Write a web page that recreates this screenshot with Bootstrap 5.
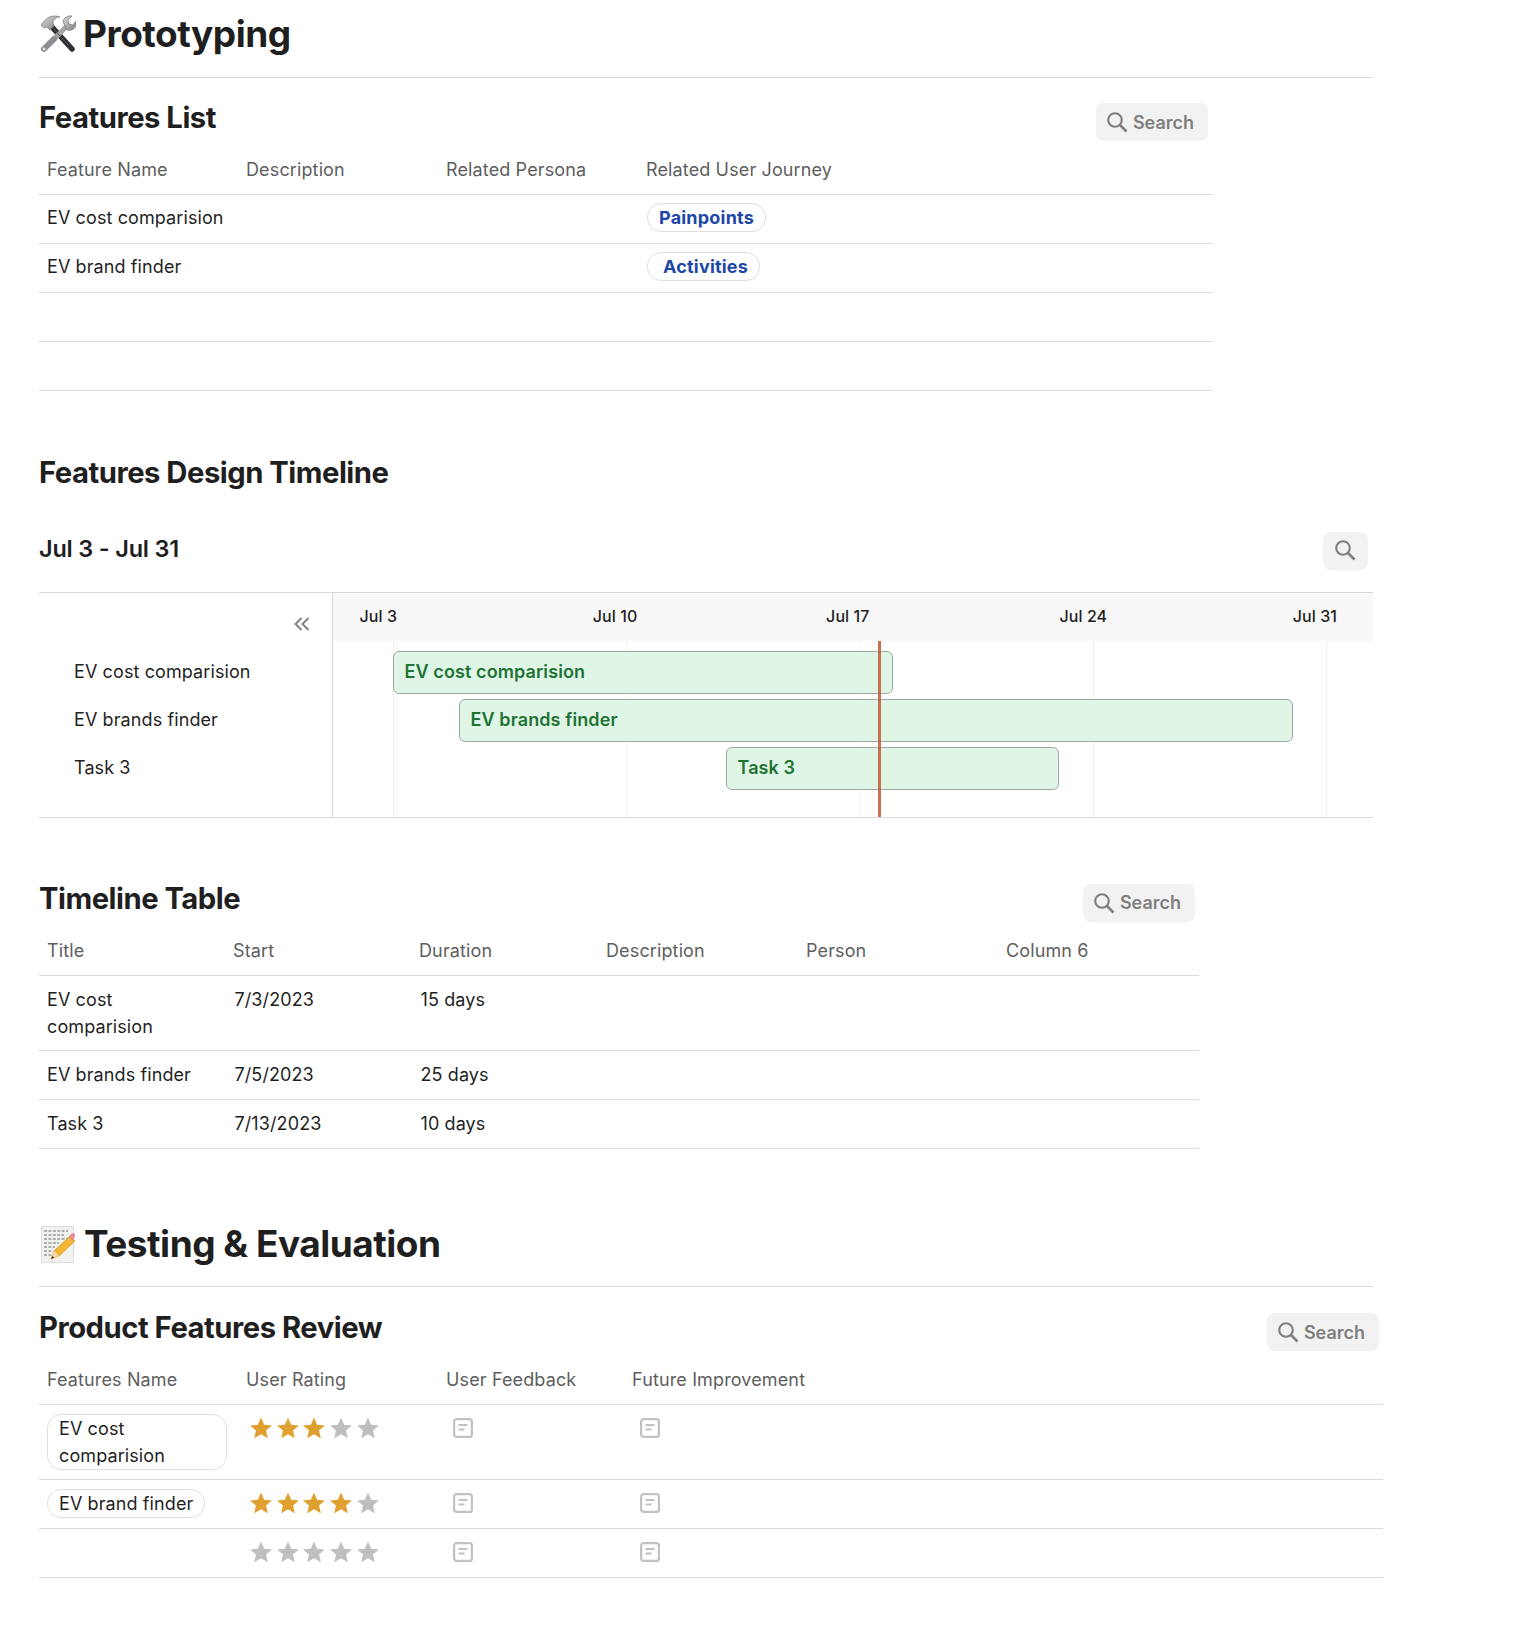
<!DOCTYPE html>
<html lang="en">
<head>
    <meta charset="UTF-8">
    <meta name="viewport" content="width=device-width, initial-scale=1.0">
    <title>Prototyping</title>
    <link rel="stylesheet" href="https://cdn.jsdelivr.net/npm/bootstrap@5.3.0/dist/css/bootstrap.min.css">
    <style>
        body {
            font-family: Inter, "Noto Sans", sans-serif;
            font-size: 18px;
            line-height: 27px;
            letter-spacing: .1px;
            color: #1f1f1f;
            background: #fff;
        }
        .page-wrap { padding: 12px 0 40px 39px; width: 1400px; }

        /* Headings */
        .page-title {
            display: flex;
            align-items: center;
            gap: 7px;
            font-size: 37px;
            line-height: 44px;
            font-weight: 700;
            letter-spacing: -0.5px;
            margin: 0;
            color: #1f1f1f;
        }
        .page-rule {
            width: 1334px;
            margin: 20px 0 26px;
            border: 0;
            border-top: 1px solid #d9d9d9;
            opacity: 1;
        }
        .first-rule { margin: 21px 0 25px; }
        .sec-title {
            font-size: 29.25px;
            line-height: 30px;
            font-weight: 700;
            letter-spacing: -0.5px;
            margin: 0;
            color: #1f1f1f;
        }
        .sec-head { height: 38px; padding-right: 4px; }
        .w-list { width: 1174px; }
        .w-list.sec-head { padding-right: 5px; }
        .w-time { width: 1160px; }
        .w-review { width: 1344px; }

        .search-btn {
            display: flex;
            align-items: center;
            gap: 5px;
            height: 38px;
            padding: 0 14px 0 10px;
            border: 0;
            border-radius: 8px;
            background: #f2f2f2;
            color: #7f7f7f;
            font-size: 18px;
            font-weight: 600;
        }
        .search-only { width: 45px; height: 38px; padding: 0 2px 2px 0; justify-content: center; }

        /* Tables */
        .flat-table {
            table-layout: fixed;
            margin: 4px 0 0;
            --bs-table-color: #1f1f1f;
            --bs-table-border-color: #dcdcdc;
        }
        .flat-table th, .flat-table td {
            height: 49px;
            padding: 9.5px 11px 10.5px 8px;
            vertical-align: top;
            border-bottom: 1px solid #dcdcdc;
        }
        .flat-table th {
            padding-top: 10.5px;
            padding-bottom: 9.5px;
            font-weight: 400;
            color: #5e5e5e;
            letter-spacing: .13px;
        }
        .col-199 { width: 199px; }
        .col-200 { width: 200px; }
        .col-186 { width: 186px; }
        .col-187 { width: 187px; }
        .flat-table .date-val { padding-left: 9.5px; }

        .link-pill {
            display: inline-block;
            vertical-align: top;
            min-width: 113px;
            padding: 0 11px;
            margin-left: 1px;
            border: 1px solid #e0e0e0;
            border-radius: 14px;
            line-height: 27px;
            text-align: center;
            font-weight: 700;
            letter-spacing: .2px;
            color: #1c47a8;
        }
        .pill-shift { padding-left: 15px; }
        .name-pill {
            display: inline-block;
            vertical-align: top;
            padding: 0 11px;
            border: 1px solid #e0e0e0;
            border-radius: 14px;
            line-height: 27px;
        }
        .flat-table .pill-cell { padding-top: 9px; padding-bottom: 9px; }
        .flat-table .link-cell { padding-top: 8px; padding-bottom: 8px; }
        .star-set { display: flex; gap: 4.7px; margin: 1px 0 0 4px; height: 26px; align-items: center; }
        .doc-icon { display: block; margin: 3.5px 0 0 7px; }
        .doc-last { margin-left: 8px; }

        /* Timeline */
        .features-timeline { line-height: 36px; margin-top: 64px; }
        .timeline-title { font-size: 23.5px; line-height: 34px; font-weight: 600; margin: 0; letter-spacing: -0.2px; }
        .timeline-head { width: 1334px; height: 37px; margin-top: 41px; padding-right: 5px; }
        .gantt {
            display: flex;
            width: 1334px;
            height: 226px;
            margin-top: 23px;
            border-top: 1px solid #d9d9d9;
            border-bottom: 1px solid #d9d9d9;
        }
        .gantt-side { width: 294px; border-right: 1px solid #d9d9d9; flex: none; }
        .collapse-mark { height: 48px; padding: 24px 22px 0 0; text-align: right; line-height: 0; }
        .side-list { padding: 7px 0 0 35px; }
        .side-row { height: 48px; line-height: 48px; }
        .gantt-main { flex: 1; min-width: 0; display: flex; flex-direction: column; }
        .gantt-dates {
            display: flex;
            height: 48px;
            padding-left: 26.5px;
            background: #f8f8f8;
            font-size: 16px;
            font-weight: 500;
            line-height: 46px;
            flex: none;
            overflow: hidden;
        }
        .date-cell { width: 233.3px; flex: none; }
        .gantt-body {
            position: relative;
            flex: 1;
            padding-top: 10px;
            background-image: linear-gradient(to right, #efefef 1px, transparent 1px);
            background-size: 233.3px 100%;
            background-position: 60px 0;
        }
        .gantt-bar {
            height: 43px;
            margin-bottom: 5px;
            padding-left: 10.5px;
            border: 1px solid #9fa9a3;
            border-radius: 6px;
            background: #dff6e7;
            color: #1f7335;
            font-weight: 600;
            line-height: 39px;
        }
        .today-line {
            position: absolute;
            left: 545px;
            top: 0;
            bottom: 0;
            width: 3px;
            background: #c9704f;
        }

        .timeline-table-head { margin-top: 66px; }
        .timeline-table-head + table { margin-top: 5px; }
        .testing-title { margin-top: 73px; gap: 9px; }
        .testing-title svg { margin-left: 2px; }
    </style>
</head>
<body>
    <svg width="0" height="0" class="d-block">
        <defs>
            <symbol id="i-search" viewBox="0 0 22 22">
                <circle cx="9" cy="9" r="6.8" fill="none" stroke="currentColor" stroke-width="2.1"/>
                <path d="M14 14l6.5 6.5" stroke="currentColor" stroke-width="2.6" fill="none"/>
            </symbol>
            <symbol id="i-star" viewBox="0 0 21 21">
                <path d="M10.5 0.5l3 6.9 7.4.7-5.6 4.9 1.7 7.3-6.5-3.9-6.5 3.9 1.7-7.3L0 8.1l7.5-.7z"/>
            </symbol>
            <symbol id="i-doc" viewBox="0 0 20 20">
                <rect x="1.1" y="1.1" width="17.8" height="17.8" rx="2.5" fill="none" stroke="currentColor" stroke-width="2.2"/>
                <path d="M5.5 7h9M5.5 11.5h6" stroke="currentColor" stroke-width="2" fill="none"/>
            </symbol>
        </defs>
    </svg>

    <div class="page-wrap">
        <!-- Prototyping -->
        <h1 class="page-title">
            <svg width="37" height="38" viewBox="0 0 37 38" aria-hidden="true">
                <defs>
                    <linearGradient id="steel" x1="0" y1="0" x2="1" y2="1">
                        <stop offset="0" stop-color="#dcdcdc"/>
                        <stop offset="1" stop-color="#7d7e82"/>
                    </linearGradient>
                </defs>
                <path d="M13 12L33 34" stroke="#2f3033" stroke-width="5.5" stroke-linecap="round"/>
                <path d="M28 11L15 24" stroke="#a4a5aa" stroke-width="5"/>
                <path d="M15 24L5 34" stroke="#8d8e93" stroke-width="6" stroke-linecap="round"/>
                <circle cx="5" cy="34" r="1.4" fill="#e6e6e6"/>
                <path d="M24 7c0-4 5-7 9-6l-4 4 1 4 4 1 3-4c2 5-3 11-9 9z" fill="url(#steel)" stroke="#6a6b70" stroke-width=".6"/>
                <path d="M2 10L6 5c4-4 10-5 15-3-4 0-7 3-7 6l1 3-4 4-3-3-3 1z" fill="url(#steel)" stroke="#6a6b70" stroke-width=".6"/>
                <path d="M13 12L30 31" stroke="#55565a" stroke-width="1"/>
            </svg>
            <span>Prototyping</span>
        </h1>
        <hr class="page-rule first-rule">

        <div class="sec-head w-list d-flex justify-content-between align-items-start">
            <h2 class="sec-title">Features List</h2>
            <button class="search-btn"><svg width="22" height="22"><use href="#i-search"/></svg>Search</button>
        </div>
        <table class="table flat-table w-list">
            <thead>
                <tr>
                    <th class="col-199">Feature Name</th>
                    <th class="col-200">Description</th>
                    <th class="col-200">Related Persona</th>
                    <th>Related User Journey</th>
                </tr>
            </thead>
            <tbody>
                <tr><td>EV cost comparision</td><td></td><td></td><td class="link-cell"><span class="link-pill">Painpoints</span></td></tr>
                <tr><td>EV brand finder</td><td></td><td></td><td class="link-cell"><span class="link-pill pill-shift">Activities</span></td></tr>
                <tr><td>&nbsp;</td><td></td><td></td><td></td></tr>
                <tr><td>&nbsp;</td><td></td><td></td><td></td></tr>
            </tbody>
        </table>

        <!-- Features Design Timeline -->
        <h2 class="sec-title features-timeline">Features Design Timeline</h2>
        <div class="timeline-head d-flex justify-content-between align-items-start">
            <h3 class="timeline-title">Jul 3 - Jul 31</h3>
            <button class="search-btn search-only"><svg width="22" height="22"><use href="#i-search"/></svg></button>
        </div>
        <div class="gantt">
            <div class="gantt-side">
                <div class="collapse-mark">
                    <svg width="16" height="14" viewBox="0 0 16 14" fill="none" stroke="#7f7f7f" stroke-width="1.9"><path d="M7.5 1L1.5 7l6 6M14.5 1l-6 6 6 6"/></svg>
                </div>
                <div class="side-list">
                    <div class="side-row">EV cost comparision</div>
                    <div class="side-row">EV brands finder</div>
                    <div class="side-row">Task 3</div>
                </div>
            </div>
            <div class="gantt-main">
                <div class="gantt-dates">
                    <div class="date-cell">Jul 3</div>
                    <div class="date-cell">Jul 10</div>
                    <div class="date-cell">Jul 17</div>
                    <div class="date-cell">Jul 24</div>
                    <div class="date-cell">Jul 31</div>
                </div>
                <div class="gantt-body">
                    <div class="gantt-bar" style="margin-left: 60px; width: 500px;">EV cost comparision</div>
                    <div class="gantt-bar" style="margin-left: 126px; width: 834px;">EV brands finder</div>
                    <div class="gantt-bar" style="margin-left: 393px; width: 333px;">Task 3</div>
                    <div class="today-line"></div>
                </div>
            </div>
        </div>

        <!-- Timeline Table -->
        <div class="sec-head w-time d-flex justify-content-between align-items-start timeline-table-head">
            <h2 class="sec-title">Timeline Table</h2>
            <button class="search-btn"><svg width="22" height="22"><use href="#i-search"/></svg>Search</button>
        </div>
        <table class="table flat-table w-time">
            <thead>
                <tr>
                    <th class="col-186">Title</th>
                    <th class="col-186">Start</th>
                    <th class="col-187">Duration</th>
                    <th class="col-200">Description</th>
                    <th class="col-200">Person</th>
                    <th>Column 6</th>
                </tr>
            </thead>
            <tbody>
                <tr><td>EV cost comparision</td><td class="date-val">7/3/2023</td><td class="date-val">15 days</td><td></td><td></td><td></td></tr>
                <tr><td>EV brands finder</td><td class="date-val">7/5/2023</td><td class="date-val">25 days</td><td></td><td></td><td></td></tr>
                <tr><td>Task 3</td><td class="date-val">7/13/2023</td><td class="date-val">10 days</td><td></td><td></td><td></td></tr>
            </tbody>
        </table>

        <!-- Testing & Evaluation -->
        <h1 class="page-title testing-title">
            <svg width="34" height="37" viewBox="0 0 34 37" aria-hidden="true">
                <rect x="0.5" y="0.5" width="32" height="36" fill="#f1f1ef" stroke="#dcdcda"/>
                <path d="M3 5h24M3 9h20M3 13h24M3 17h15M3 21h11M3 25h9M3 29h8" stroke="#5f5f62" stroke-width=".9" stroke-dasharray="3 1.4" fill="none"/>
                <path d="M10 33l3-8L29 10l5 5-16 15z" fill="#f2b632" stroke="#c98a1c" stroke-width=".6"/>
                <path d="M13 25l5 5-8 3z" fill="#f6dcae"/>
                <path d="M10 33l1.2-3.2 2 2z" fill="#4a3a2a"/>
                <path d="M28 11l2-3c1-1 3-1 4 0l0 0c1 1 0 3-1 4l-1 3z" fill="#e58a94"/>
            </svg>
            <span>Testing &amp; Evaluation</span>
        </h1>
        <hr class="page-rule">

        <div class="sec-head w-review d-flex justify-content-between align-items-start">
            <h2 class="sec-title">Product Features Review</h2>
            <button class="search-btn"><svg width="22" height="22"><use href="#i-search"/></svg>Search</button>
        </div>
        <table class="table flat-table w-review review-table">
            <thead>
                <tr>
                    <th class="col-199">Features Name</th>
                    <th class="col-200">User Rating</th>
                    <th class="col-186">User Feedback</th>
                    <th>Future Improvement</th>
                </tr>
            </thead>
            <tbody id="review-rows"></tbody>
        </table>
    </div>

    <script src="https://cdn.jsdelivr.net/npm/bootstrap@5.3.0/dist/js/bootstrap.bundle.min.js"></script>
    <script>
        // Review rows: name and number of filled stars
        const reviews = [
            { name: 'EV cost comparision', stars: 3 },
            { name: 'EV brand finder', stars: 4 },
            { name: '', stars: 0 }
        ];
        const docIcon = cls => `<svg class="doc-icon ${cls}" width="20" height="20" color="#c2c2c2"><use href="#i-doc"/></svg>`;
        document.getElementById('review-rows').innerHTML = reviews.map(r => {
            let stars = '';
            for (let i = 0; i < 5; i++) {
                stars += `<svg width="22" height="22" fill="${i < r.stars ? '#e0a030' : '#bfbfbf'}"><use href="#i-star"/></svg>`;
            }
            const pill = r.name ? `<span class="name-pill">${r.name}</span>` : '';
            return `<tr><td class="pill-cell">${pill}</td><td><div class="star-set">${stars}</div></td><td>${docIcon('')}</td><td>${docIcon('doc-last')}</td></tr>`;
        }).join('');
    </script>
</body>
</html>
